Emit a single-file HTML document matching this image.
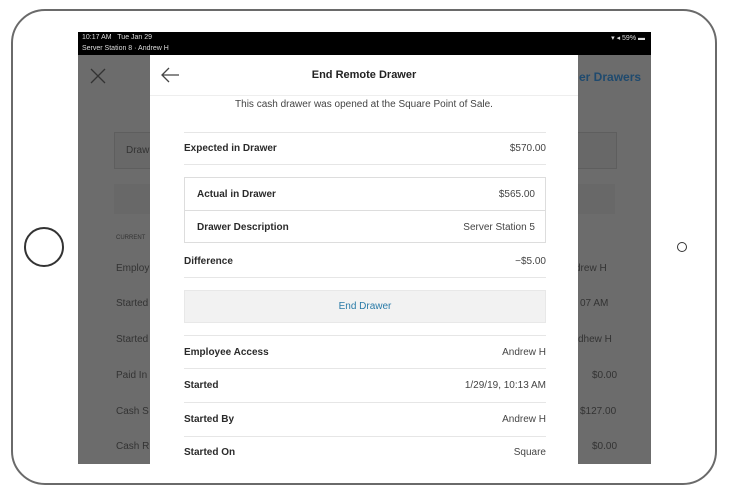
<!DOCTYPE html>
<html><head><style>
body{margin:0;width:730px;height:496px;background:#fff;position:relative;overflow:hidden;font-family:"Liberation Sans",sans-serif;}
.ipad{position:absolute;left:11px;top:9px;width:706px;height:476px;border:2px solid #6a6a6a;border-radius:34px;box-sizing:border-box;}
.home{position:absolute;left:24px;top:227px;width:40px;height:40px;border:2px solid #333;border-radius:50%;box-sizing:border-box;}
.cam{position:absolute;left:677px;top:242px;width:10px;height:10px;border:1.5px solid #333;border-radius:50%;box-sizing:border-box;}
.screen{position:absolute;left:78px;top:32px;width:573px;height:432px;background:#6c6c6c;overflow:hidden;}
.status{position:absolute;left:0;top:0;width:573px;height:23px;background:#000;color:#ddd;font-size:7px;}
.bg{position:absolute;color:#333;font-size:10px;}
.modal{position:absolute;left:72px;top:23px;width:428px;height:409px;background:#fff;}
.row{position:absolute;left:34px;width:362px;height:12px;font-size:10px;color:#333;display:flex;justify-content:space-between;align-items:center;}
.row b{font-weight:bold;color:#2a2a2a}
.row span{color:#444}
.line{position:absolute;left:34px;width:362px;height:1px;background:#e6e6e6;}
</style></head><body>
<div class="ipad"></div>
<div class="home"></div>
<div class="cam"></div>
<div class="screen">
 <div class="status"><div style="position:absolute;left:4px;top:2px">10:17 AM &nbsp; Tue Jan 29</div><div style="position:absolute;left:4px;top:13px">Server Station 8 · Andrew H</div><div style="position:absolute;right:6px;top:2px">▾ ◂ 59% ▬</div></div>
 <svg style="position:absolute;left:12px;top:36px" width="16" height="16"><path d="M1 1L15 15M15 1L1 15" stroke="#333" stroke-width="1.3"/></svg>
 <div class="bg" style="left:501px;top:38px;color:#1f4a6e;font-weight:bold;font-size:12px">er Drawers</div>
 <div style="position:absolute;left:36px;top:100px;width:501px;height:35px;border:1px solid #5e5e5e;background:#686868"></div>
 <div class="bg" style="left:48px;top:113px">Draw</div>
 <div style="position:absolute;left:36px;top:152px;width:501px;height:30px;background:#686868"></div>
 <div class="bg" style="left:38px;top:203px;font-size:6px">CURRENT</div>
 <div class="bg" style="left:38px;top:231px">Employ</div><div class="bg" style="left:497px;top:231px">drew H</div>
 <div class="bg" style="left:38px;top:266px">Started</div><div class="bg" style="left:502px;top:266px">07 AM</div>
 <div class="bg" style="left:38px;top:302px">Started</div><div class="bg" style="left:500px;top:302px">dhew H</div>
 <div class="bg" style="left:38px;top:338px">Paid In</div><div class="bg" style="left:514px;top:338px">$0.00</div>
 <div class="bg" style="left:38px;top:374px">Cash S</div><div class="bg" style="left:502px;top:374px">$127.00</div>
 <div class="bg" style="left:38px;top:409px">Cash R</div><div class="bg" style="left:514px;top:409px">$0.00</div>
 <div class="modal">
  <svg style="position:absolute;left:10px;top:12px" width="20" height="16"><path d="M19 8H2M9 1L2 8L9 15" stroke="#444" stroke-width="1.3" fill="none"/></svg>
  <div style="position:absolute;left:0;width:428px;top:14px;text-align:center;font-size:11px;font-weight:bold;color:#222">End Remote Drawer</div>
  <div style="position:absolute;left:0;top:40px;width:428px;height:1px;background:#eee"></div>
  <div style="position:absolute;left:0;width:428px;top:44px;text-align:center;font-size:10px;color:#444">This cash drawer was opened at the Square Point of Sale.</div>
  <div class="line" style="top:77px"></div>
  <div class="row" style="top:87px"><b>Expected in Drawer</b><span>$570.00</span></div>
  <div class="line" style="top:109px"></div>
  <div style="position:absolute;left:34px;top:122px;width:362px;height:66px;border:1px solid #ddd;box-sizing:border-box"></div>
  <div style="position:absolute;left:35px;top:155px;width:360px;height:1px;background:#ddd"></div>
  <div class="row" style="top:133px;left:47px;width:338px"><b>Actual in Drawer</b><span>$565.00</span></div>
  <div class="row" style="top:166px;left:47px;width:338px"><b>Drawer Description</b><span>Server Station 5</span></div>
  <div class="row" style="top:200px"><b>Difference</b><span>−$5.00</span></div>
  <div class="line" style="top:222px"></div>
  <div style="position:absolute;left:34px;top:235px;width:362px;height:33px;background:#f2f2f2;border:1px solid #e8e8e8;box-sizing:border-box;text-align:center;line-height:31px;font-size:10px;color:#2a7ba8">End Drawer</div>
  <div class="line" style="top:280px"></div>
  <div class="row" style="top:291px"><b>Employee Access</b><span>Andrew H</span></div>
  <div class="line" style="top:313px"></div>
  <div class="row" style="top:324px"><b>Started</b><span>1/29/19, 10:13 AM</span></div>
  <div class="line" style="top:347px"></div>
  <div class="row" style="top:358px"><b>Started By</b><span>Andrew H</span></div>
  <div class="line" style="top:381px"></div>
  <div class="row" style="top:391px"><b>Started On</b><span>Square</span></div>
 </div>
</div>
</body></html>
